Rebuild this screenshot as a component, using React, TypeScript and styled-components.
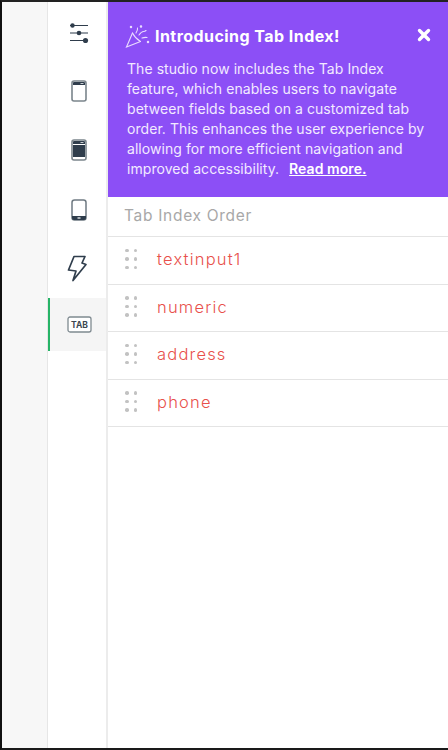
import React from 'react'
import styled, { createGlobalStyle } from 'styled-components'
import { X } from 'lucide-react'

const GlobalStyle = createGlobalStyle`
  html, body {
    margin: 0;
    padding: 0;
    background: #fff;
  }
  * {
    box-sizing: border-box;
  }
`

const Frame = styled.div`
  width: 448px;
  height: 750px;
  display: flex;
  border-left: 2px solid #111;
  border-top: 2px solid #222;
  border-bottom: 2px solid #1a1a1a;
  font-family: Inter, "Open Sans", sans-serif;
  overflow: hidden;
`

const Gutter = styled.div`
  width: 46px;
  flex: none;
  background: #f7f7f7;
  border-right: 1px solid #e6e6e6;
`

const Rail = styled.nav`
  width: 60px;
  flex: none;
  padding-top: 1px;
  border-right: 2px solid #ececec;
  display: flex;
  flex-direction: column;
`

const RailItem = styled.div<{ $active?: boolean }>`
  height: ${p => (p.$active ? '53px' : '59px')};
  display: flex;
  align-items: center;
  justify-content: center;
  padding-left: 2px;
  border-left: 2px solid ${p => (p.$active ? '#27b467' : 'transparent')};
  background: ${p => (p.$active ? '#f5f5f5' : 'transparent')};
`

const Main = styled.main`
  flex: 1;
  min-width: 0;
  display: flex;
  flex-direction: column;
`

const Banner = styled.section`
  height: 195px;
  flex: none;
  background: #8c4ff6;
  color: #f2eaff;
  padding: 20px 16px 0 17px;
`

const BannerHead = styled.div`
  display: flex;
  align-items: center;
  height: 28px;
  margin-bottom: 9px;
`

const BannerTitle = styled.h2`
  flex: 1;
  margin: 0 0 0 5px;
  font-size: 16px;
  font-weight: 700;
  color: #fff;
  letter-spacing: 0.45px;
`

const Close = styled.button`
  border: 0;
  padding: 0;
  background: none;
  color: #fff;
  display: flex;
  margin: -2px -1px 0 0;
`

const BannerText = styled.p`
  margin: 0 0 0 2px;
  font-size: 14px;
  line-height: 20px;
  letter-spacing: 0.06px;
  white-space: nowrap;
`

const ReadMore = styled.a`
  margin-left: 6px;
  color: #fff;
  font-weight: 600;
  text-decoration: underline;
`

const ListHead = styled.div`
  height: 40px;
  flex: none;
  display: flex;
  align-items: center;
  padding-left: 16px;
  padding-bottom: 2px;
  font-size: 15.5px;
  letter-spacing: 0.7px;
  color: #a8a8a8;
  border-bottom: 1px solid #e4e4e4;
`

const Row = styled.div`
  height: 47.6px;
  flex: none;
  display: flex;
  align-items: center;
  padding: 0 0 2px 17px;
  border-bottom: 1px solid #e4e4e4;
`

const Grip = styled.div`
  width: 12px;
  display: grid;
  grid-template-columns: 3.5px 3.5px;
  column-gap: 5px;
  row-gap: 5px;
  margin-right: 20px;
  margin-bottom: 1px;
`

const GripDot = styled.span`
  width: 3.5px;
  height: 3.5px;
  border-radius: 50%;
  background: #c2c2c2;
`

const RowLabel = styled.span`
  font-size: 16.5px;
  font-weight: 300;
  color: #e8504b;
  letter-spacing: 1.2px;
`

const RaisedSvg = styled.svg`
  margin-bottom: 2px;
`

const SlidersIcon = () => (
  <svg width="20" height="20" viewBox="0 0 20 20" fill="none" stroke="#2f3d4c" strokeWidth="1.2">
    <path d="M1 2.5h18M1 10h18M1 17.5h18" />
    <circle cx="3.5" cy="2.5" r="2.2" fill="#2f3d4c" stroke="none" />
    <circle cx="10" cy="10" r="2.3" fill="#2f3d4c" stroke="none" />
    <circle cx="16.5" cy="17.5" r="2.6" fill="#2f3d4c" stroke="none" />
  </svg>
)

const ScreenIcon = ({ fill }: { fill?: boolean }) => (
  <RaisedSvg width="16" height="22" viewBox="0 0 16 22">
    <rect x="1" y="1" width="14" height="20" rx="2" fill="#fff" stroke="#7b858c" strokeWidth="1.6" />
    <path d="M2 3a1 1 0 0 1 1-1h10a1 1 0 0 1 1 1v2H2z" fill="#2f3d4c" />
    <path d="M9.5 3.5h3" stroke="#c8ced2" strokeWidth="1" />
    {fill && <rect x="2" y="6" width="12" height="12" fill="#2f3d4c" />}
  </RaisedSvg>
)

const PhoneIcon = () => (
  <svg width="16" height="22" viewBox="0 0 16 22">
    <rect x="1" y="1" width="14" height="20" rx="2.5" fill="#fff" stroke="#6f7a82" strokeWidth="1.5" />
    <path d="M1 17h14v2a2 2 0 0 1-2 2H3a2 2 0 0 1-2-2z" fill="#2f3d4c" />
    <rect x="6.5" y="18.4" width="3" height="1.2" fill="#fff" />
  </svg>
)

const BoltIcon = () => (
  <svg width="24" height="27" viewBox="0 0 24 27" fill="none" stroke="#2f3d4c" strokeWidth="1.7" strokeLinejoin="round">
    <path d="M7 1.5h11l-3 6.5 4 1.5L6 25.500l3-9.500-7.500-1z" />
  </svg>
)

const TabIcon = () => (
  <svg width="25" height="17" viewBox="0 0 25 17">
    <rect x="1" y="1" width="23" height="15" rx="2" fill="#fff" stroke="#7f8a90" strokeWidth="1.3" />
    <text x="12.500" y="12" textAnchor="middle" fontFamily="Inter, sans-serif" fontSize="8.5" fontWeight="700" fill="#3c4852">
      TAB
    </text>
  </svg>
)

const PartyIcon = () => (
  <svg width="25" height="25" viewBox="0 0 25 25" fill="none" stroke="#eadcff" strokeWidth="1.1" strokeLinecap="round">
    <path d="M7.500 9 1.500 23l14-5.500" />
    <path d="M7.500 9c2 4 4.500 6.500 8 8.500" />
    <path d="M11 9c1-1.500 2-3 1.500-5M14 11c1.500-2 3-3.500 4.500-3.500 1 0 2-.5 2.500-1M17 14c1.500-.5 3-1 5-.5" />
    <circle cx="6" cy="3" r=".7" fill="#eadcff" />
    <circle cx="16" cy="2.500" r=".7" fill="#eadcff" />
    <circle cx="23" cy="18" r=".7" fill="#eadcff" />
  </svg>
)

const fields = ['textinput1', 'numeric', 'address', 'phone']

const App: React.FC = () => {
  return (
    <Frame>
      <GlobalStyle />
      <Gutter />
      <Rail>
        <RailItem><SlidersIcon /></RailItem>
        <RailItem><ScreenIcon /></RailItem>
        <RailItem><ScreenIcon fill /></RailItem>
        <RailItem><PhoneIcon /></RailItem>
        <RailItem><BoltIcon /></RailItem>
        <RailItem $active><TabIcon /></RailItem>
      </Rail>
      <Main>
        <Banner>
          <BannerHead>
            <PartyIcon />
            <BannerTitle>Introducing Tab Index!</BannerTitle>
            <Close aria-label="Close"><X size={18} strokeWidth={4.5} /></Close>
          </BannerHead>
          <BannerText>
            The studio now includes the Tab Index<br />
            feature, which enables users to navigate<br />
            between fields based on a customized tab<br />
            order. This enhances the user experience by<br />
            allowing for more efficient navigation and<br />
            improved accessibility. <ReadMore href="#">Read more.</ReadMore>
          </BannerText>
        </Banner>
        <ListHead>Tab Index Order</ListHead>
        {fields.map(name => (
          <Row key={name}>
            <Grip>
              {Array.from({ length: 6 }, (_, i) => <GripDot key={i} />)}
            </Grip>
            <RowLabel>{name}</RowLabel>
          </Row>
        ))}
      </Main>
    </Frame>
  )
}

export default App
